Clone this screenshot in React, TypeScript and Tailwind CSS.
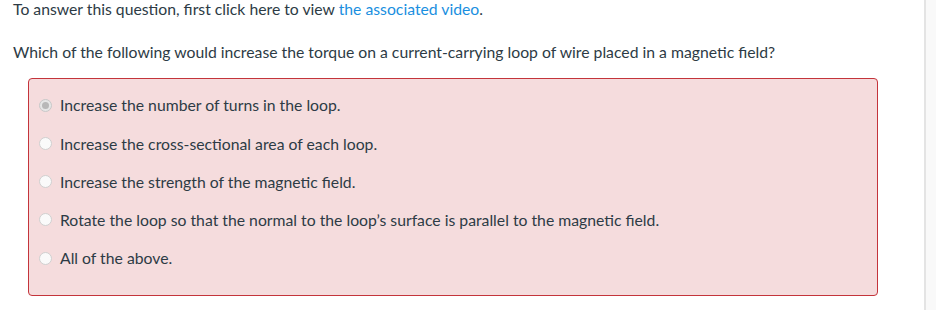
import React from "react";

const options = [
  "Increase the number of turns in the loop.",
  "Increase the cross-sectional area of each loop.",
  "Increase the strength of the magnetic field.",
  "Rotate the loop so that the normal to the loop’s surface is parallel to the magnetic field.",
  "All of the above.",
];

export default function App() {
  return (
    <div className="flex h-[310px] w-[936px] bg-white text-[#2d3b45]" style={{ fontFamily: "Lato, 'Noto Sans', sans-serif" }}>
      <div className="w-[924px] pl-[13px] pr-[46px]">
        <p className="mt-[-2px] text-[15.75px] leading-[22px]">
          To answer this question, first click here to view{" "}
          <a className="text-[#1a8fe0]">the associated video</a>.
        </p>
        <p className="mt-[21px] text-[15.75px] leading-[22px]">
          Which of the following would increase the torque on a current-carrying loop of wire placed in a magnetic field?
        </p>
        <div className="ml-[15px] mt-[15px] h-[218px] rounded-[4px] border border-[#c4343b] bg-[#f5dcdd] pt-[7px]">
          {options.map((o, i) => (
            <div key={i} className="flex h-[38.25px] items-center pl-[10px] text-[15.75px]">
              <span
                className={
                  "mr-[8px] flex h-[13px] w-[13px] items-center justify-center rounded-full border " +
                  (i === 0 ? "border-[#c8c8c8] bg-[#e6e6e6]" : "border-[#d0d0d0] bg-[#fafafa]")
                }
              >
                {i === 0 && <span className="h-[7px] w-[7px] rounded-full bg-[#b8b8b8]" />}
              </span>
              <span>{o}</span>
            </div>
          ))}
        </div>
      </div>
      <div className="h-full flex-1 border-l-2 border-[#e4e4e4] bg-[#f9f9f9]" />
    </div>
  );
}
